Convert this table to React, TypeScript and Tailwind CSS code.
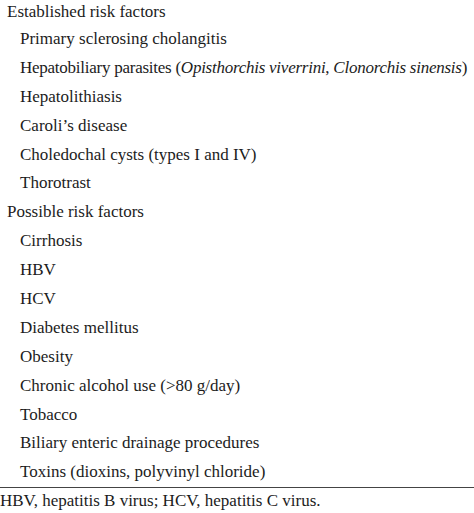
const established = [
  'Primary sclerosing cholangitis',
  'HEPATO',
  'Hepatolithiasis',
  'Caroli’s disease',
  'Choledochal cysts (types I and IV)',
  'Thorotrast',
]

const possible = [
  'Cirrhosis',
  'HBV',
  'HCV',
  'Diabetes mellitus',
  'Obesity',
  'Chronic alcohol use (>80 g/day)',
  'Tobacco',
  'Biliary enteric drainage procedures',
  'Toxins (dioxins, polyvinyl chloride)',
]

function Item({ text }: { text: string }) {
  if (text === 'HEPATO') {
    return (
      <div className="h-[28.9px] pl-[20px] leading-[28.9px] whitespace-nowrap tracking-[-0.25px]">
        Hepatobiliary parasites (<i>Opisthorchis viverrini</i>, <i>Clonorchis sinensis</i>)
      </div>
    )
  }
  return <div className="h-[28.9px] pl-[20px] leading-[28.9px] whitespace-nowrap">{text}</div>
}

export default function App() {
  return (
    <div className="w-[474px] h-[513px] overflow-hidden bg-white text-[#1c1c1c] text-[17px] font-['Liberation_Serif',serif]">
      <div className="h-[25px] pl-[7px] leading-[24px]">Established risk factors</div>
      {established.map((t) => (
        <Item key={t} text={t} />
      ))}
      <div className="h-[28.9px] pl-[7px] leading-[28.9px]">Possible risk factors</div>
      {possible.map((t) => (
        <Item key={t} text={t} />
      ))}
      <div className="border-t border-[#444]" />
      <div className="leading-[26px] whitespace-nowrap">HBV, hepatitis B virus; HCV, hepatitis C virus.</div>
    </div>
  )
}
